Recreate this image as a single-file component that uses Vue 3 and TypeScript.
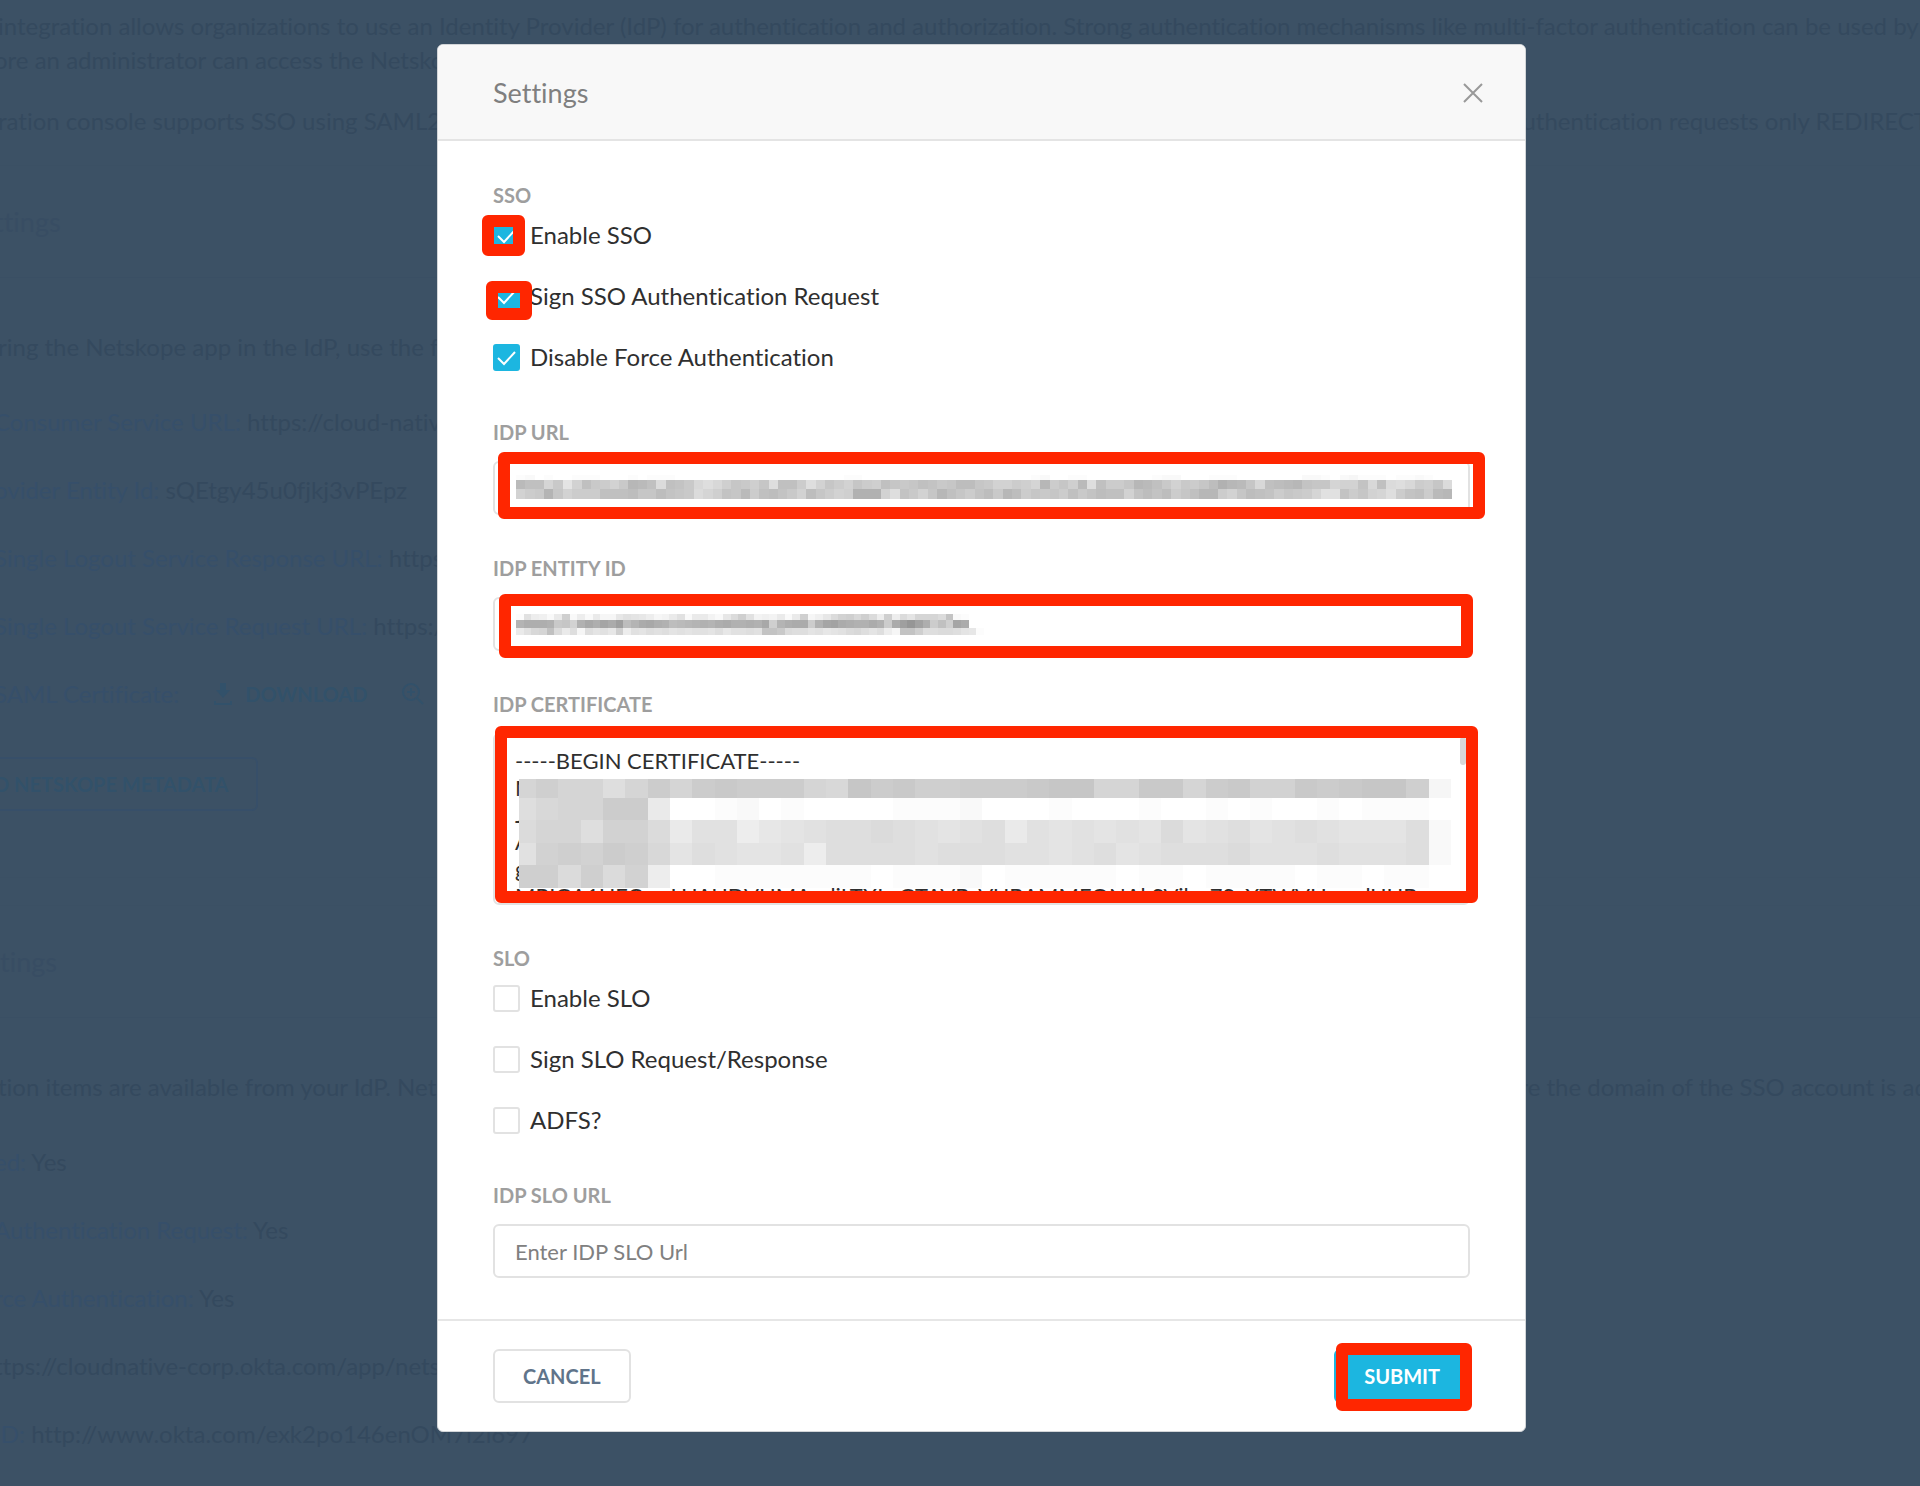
<script setup lang="ts">
import { reactive } from 'vue'

interface Fact { label: string; value: string }
interface MosaicRow { y: number; h: number; tones: string }
interface Mosaic { cells: number; height: number; rows: MosaicRow[] }

const endpoints: Fact[] = [
  { label: 'Consumer Service URL:', value: 'https://cloud-native' },
  { label: 'ovider Entity Id:', value: 'sQEtgy45u0fjkj3vPEpz' },
  { label: 'Single Logout Service Response URL:', value: 'https:/' },
  { label: 'Single Logout Service Request URL:', value: 'https://' },
]

const status: Fact[] = [
  { label: 'ed:', value: 'Yes' },
  { label: 'Authentication Request:', value: 'Yes' },
  { label: 'rce Authentication:', value: 'Yes' },
  { label: '', value: 'ttps://cloudnative-corp.okta.com/app/nets' },
  { label: 'ID:', value: 'http://www.okta.com/exk2po146enOM7i2l697' },
]

const sso = reactive([
  { id: 'enable-sso', label: 'Enable SSO', on: true, mark: 'mark-enable' },
  { id: 'sign-sso', label: 'Sign SSO Authentication Request', on: true, mark: 'mark-sign' },
  { id: 'disable-force', label: 'Disable Force Authentication', on: true, mark: '' },
])

const slo = reactive([
  { id: 'enable-slo', label: 'Enable SLO', on: false, mark: '' },
  { id: 'sign-slo', label: 'Sign SLO Request/Response', on: false, mark: '' },
  { id: 'adfs', label: 'ADFS?', on: false, mark: '' },
])

const form = reactive({
  idpUrl: '',
  entityId: '',
  certificate: [
    '-----BEGIN CERTIFICATE-----',
    'M',
    'J',
    'A',
    'g',
    'MRIGA1UECgwLUAUDVHMAodiLTXLaGTAVBzVUBAMMEQNAkSVilaz7SaXTWVHazadUHB',
  ].join('\n'),
  sloUrl: '',
})

// Each base-36 digit is one cell: the higher the digit, the darker the grey.
const urlMosaic: Mosaic = {
  cells: 100,
  height: 24,
  rows: [
    { y: 0, h: 5, tones: '1201001110001011100000000000000000011000000000000000000120011000000012200011100000002210231110112100' },
    { y: 5, h: 9, tones: 'nllei9flihfionlclkidbdgjigjbllhbfjhfjhgljijlkijmmjiffhgeohjgnblhhjonlifihjmqonjdlmnokjjeffkdlcbdhgjc' },
    { y: 14, h: 10, tones: 'fhipjfhhhlllmjjmkjicegkjnhlmkifmjhfgqqqfbkifjoljhkmiomhjijhlikmllfkmkmhjloohfjmlkhjiheaakhjfebhklhno' },
  ],
}

const entityMosaic: Mosaic = {
  cells: 61,
  height: 21,
  rows: [
    { y: 0, h: 6, tones: '1a6527g2627338a986347a277428cga454727g358cfgdgc6g6c9eeeck210' },
    { y: 6, h: 8, tones: 'prrrqijfqtruswmpstrqmnopqprsqqrqtgprsshquvsrqqsqhswzvrhlgus0' },
    { y: 14, h: 7, tones: '7adelc7b3b9a8g6a9bab9a9aa9b8aabakkicbb9a89acdb9b63kkgbbccb9810' },
  ],
}

const certMosaic: Mosaic = {
  cells: 42,
  height: 109,
  rows: [
    { y: 0, h: 19, tones: 'egeebehehihhhedjhigghhhijjeeiiehiffihijjg3' },
    { y: 19, h: 22, tones: 'bdeehh700120100001112000100010010100101110' },
    { y: 41, h: 23, tones: 'ceebffc7aa689abbcba9ab7a9a9a9c9ab9aba999b2' },
    { y: 64, h: 22, tones: 'afgfhgd9ba99a6bbbbabbbaa9ab9abbbcaaabaaab2' },
    { y: 86, h: 23, tones: 'ggcgcf600111111101112011111011011110110110' },
  ],
}

function tone(digit: string): string {
  const level = 255 - parseInt(digit, 36) * 3
  return `rgb(${level}, ${level}, ${level})`
}
</script>

<template>
  <div class="app">
    <main class="page">
      <div class="intro">
        <p class="line">integration allows organizations to use an Identity Provider (IdP) for authentication and authorization. Strong authentication mechanisms like multi-factor authentication can be used by the</p>
        <p class="line cut">ore an administrator can access the Netskope</p>
        <p class="line split">
          <span>ration console supports SSO using SAML2.0</span>
          <span>authentication requests only REDIRECT</span>
        </p>
      </div>

      <section class="panel">
        <h2 class="cut">ttings</h2>
        <div class="panel-body">
          <p class="line lead">ring the Netskope app in the IdP, use the fo</p>
          <div class="facts">
            <p v-for="fact in endpoints" :key="fact.label" class="line cut">
              <span class="fact-label">{{ fact.label }}</span> {{ fact.value }}
            </p>
            <div class="line cut cert">
              <span class="fact-label">SAML Certificate:</span>
              <button type="button" class="link">
                <svg width="18" height="22" viewBox="0 0 18 22" aria-hidden="true">
                  <path d="M6 0h6v7h4l-7 8-7-8h4z" fill="currentColor" />
                  <path d="M1 18v3h16v-3" fill="none" stroke="currentColor" stroke-width="2" />
                </svg>
                DOWNLOAD
              </button>
              <button type="button" class="link" aria-label="View">
                <svg width="22" height="22" viewBox="0 0 22 22" fill="none" stroke="currentColor" stroke-width="2" aria-hidden="true">
                  <circle cx="9" cy="9" r="8" />
                  <path d="M15 15l6 6M9 5v8M5 9h8" />
                </svg>
              </button>
            </div>
          </div>
          <button type="button" class="metadata">D NETSKOPE METADATA</button>
        </div>
      </section>

      <section class="panel">
        <h2>tings</h2>
        <div class="panel-body">
          <p class="line lead split">
            <span>tion items are available from your IdP. Nets</span>
            <span>ure the domain of the SSO account is ad</span>
          </p>
          <div class="facts">
            <p v-for="fact in status" :key="fact.label + fact.value" class="line cut">
              <span v-if="fact.label" class="fact-label">{{ fact.label }}</span> {{ fact.value }}
            </p>
          </div>
        </div>
      </section>
    </main>

    <div class="backdrop">
      <form class="modal" role="dialog" aria-labelledby="modal-title" @submit.prevent>
        <header class="modal-head">
          <h1 id="modal-title">Settings</h1>
          <button type="button" class="close" aria-label="Close">
            <svg width="20" height="20" viewBox="0 0 20 20" aria-hidden="true">
              <path d="M1 1l18 18M19 1L1 19" fill="none" stroke="#999" stroke-width="2" />
            </svg>
          </button>
        </header>

        <div class="modal-body">
          <fieldset class="group">
            <legend class="caption">SSO</legend>
            <div class="checks">
              <div v-for="item in sso" :key="item.id" class="check">
                <span class="box">
                  <input :id="item.id" v-model="item.on" type="checkbox" />
                  <svg v-if="item.on" class="tick" viewBox="0 0 27 27" aria-hidden="true">
                    <path d="M5 14l6 6L22 8" fill="none" stroke="#fff" stroke-width="2" />
                  </svg>
                </span>
                <label :for="item.id">{{ item.label }}</label>
                <span v-if="item.mark" class="mark" :class="item.mark"></span>
              </div>
            </div>
          </fieldset>

          <div class="field">
            <label class="caption" for="idp-url">IDP URL</label>
            <div class="control">
              <input id="idp-url" v-model="form.idpUrl" type="text" class="input" />
              <svg class="mosaic mosaic-url" :viewBox="`0 0 ${urlMosaic.cells} ${urlMosaic.height}`" preserveAspectRatio="none" shape-rendering="crispEdges" aria-hidden="true">
                <g v-for="row in urlMosaic.rows" :key="row.y">
                  <rect v-for="(t, i) in row.tones.split('')" :key="i" :x="i" :y="row.y" width="1" :height="row.h" :fill="tone(t)" />
                </g>
              </svg>
              <span class="mark mark-url"></span>
            </div>
          </div>

          <div class="field">
            <label class="caption" for="idp-entity">IDP ENTITY ID</label>
            <div class="control">
              <input id="idp-entity" v-model="form.entityId" type="text" class="input" />
              <svg class="mosaic mosaic-entity" :viewBox="`0 0 ${entityMosaic.cells} ${entityMosaic.height}`" preserveAspectRatio="none" shape-rendering="crispEdges" aria-hidden="true">
                <g v-for="row in entityMosaic.rows" :key="row.y">
                  <rect v-for="(t, i) in row.tones.split('')" :key="i" :x="i" :y="row.y" width="1" :height="row.h" :fill="tone(t)" />
                </g>
              </svg>
              <span class="mark mark-entity"></span>
            </div>
          </div>

          <div class="field">
            <label class="caption" for="idp-cert">IDP CERTIFICATE</label>
            <div class="control">
              <textarea id="idp-cert" v-model="form.certificate" class="input area" spellcheck="false"></textarea>
              <span class="thumb"></span>
              <svg class="mosaic mosaic-cert" :viewBox="`0.24 0 ${certMosaic.cells - 0.24} ${certMosaic.height}`" preserveAspectRatio="none" shape-rendering="crispEdges" aria-hidden="true">
                <g v-for="row in certMosaic.rows" :key="row.y">
                  <rect v-for="(t, i) in row.tones.split('')" :key="i" :x="i" :y="row.y" width="1" :height="row.h" :fill="tone(t)" />
                </g>
              </svg>
              <span class="mark mark-cert"></span>
            </div>
          </div>

          <fieldset class="group">
            <legend class="caption">SLO</legend>
            <div class="checks">
              <div v-for="item in slo" :key="item.id" class="check">
                <span class="box">
                  <input :id="item.id" v-model="item.on" type="checkbox" />
                </span>
                <label :for="item.id">{{ item.label }}</label>
              </div>
            </div>
          </fieldset>

          <div class="field">
            <label class="caption" for="slo-url">IDP SLO URL</label>
            <div class="control">
              <input id="slo-url" v-model="form.sloUrl" type="text" class="input" placeholder="Enter IDP SLO Url" />
            </div>
          </div>
        </div>

        <footer class="modal-foot">
          <button type="button" class="btn">CANCEL</button>
          <div class="submit-wrap">
            <button type="submit" class="btn primary">SUBMIT</button>
            <span class="mark mark-submit"></span>
          </div>
        </footer>
      </form>
    </div>
  </div>
</template>

<style>
body {
  margin: 0;
  background: #3c5165;
}
</style>

<style scoped>
* {
  box-sizing: border-box;
}

.app {
  display: grid;
  min-height: 100vh;
  overflow: hidden;
  background: #3c5165;
  font-family: Lato, "Open Sans", sans-serif;
  font-size: 24px;
  font-variant-ligatures: none;
  line-height: 34px;
  color: #34495e;
}

.page,
.backdrop {
  grid-area: 1 / 1;
  min-width: 0;
}

/* Page behind the dialog */
.page {
  padding-top: 9px;
  overflow: hidden;
}

.line {
  margin: 0 0 0 -2px;
  white-space: nowrap;
}

.cut {
  margin-left: -6px;
}

.split {
  display: flex;
  justify-content: space-between;
  margin-right: -8px;
}

.intro .split {
  margin-top: 27px;
}

.panel {
  margin-top: 27px;
  border-top: 1px solid #3b5064;
  border-bottom: 1px solid #3b5064;
}

.panel h2 {
  display: flex;
  align-items: center;
  height: 112px;
  margin-top: 0;
  margin-bottom: 0;
  border-bottom: 1px solid #3a4f64;
  font-size: 27px;
  font-weight: 400;
  color: #384d63;
}

.panel-body {
  padding: 52px 0 66px;
}

.lead {
  margin-bottom: 41px;
}

.facts {
  display: flex;
  flex-direction: column;
  gap: 34px;
}

.fact-label {
  color: #364f6a;
}

.cert {
  display: flex;
  align-items: center;
}

.link {
  display: flex;
  align-items: center;
  gap: 13px;
  margin-left: 35px;
  padding: 0;
  border: 0;
  background: none;
  font: 700 20px/24px Lato, sans-serif;
  color: #32516a;
}

.metadata {
  height: 54px;
  margin: 46px 0 0 -6px;
  padding: 0 28px 0 0;
  border: 2px solid #374f69;
  border-left: 0;
  border-radius: 0 6px 6px 0;
  background: none;
  font: 700 20px/24px Lato, sans-serif;
  color: #32516a;
}

/* Dialog */
.backdrop {
  position: relative;
  display: flex;
  align-items: flex-start;
  justify-content: center;
  padding: 44px 0 55px 43px;
}

.modal {
  width: 100%;
  max-width: 1089px;
  border: 1px solid #d2d5d8;
  border-radius: 6px;
  background: #fff;
  color: #2f2f2f;
}

.modal-head {
  display: flex;
  align-items: center;
  justify-content: space-between;
  height: 96px;
  padding: 2px 42px 0 55px;
  border-bottom: 2px solid #e4e4e4;
  border-radius: 5px 5px 0 0;
  background: #f8f8f8;
}

.modal-head h1 {
  margin: 0;
  font-size: 27px;
  font-weight: 400;
  color: #7f7f7f;
}

.close {
  display: flex;
  padding: 0;
  border: 0;
  background: none;
}

.modal-body {
  display: flex;
  flex-direction: column;
  padding: 42px 55px 41px;
}

.group {
  min-width: 0;
  margin: 0 0 48px;
  padding: 0;
  border: 0;
}

.caption {
  display: block;
  padding: 0;
  font-size: 20px;
  font-weight: 700;
  line-height: 24px;
  color: #9e9e9e;
}

.checks {
  display: flex;
  flex-direction: column;
  gap: 31px;
  padding-top: 13px;
}

.check {
  position: relative;
  display: flex;
  align-items: center;
  gap: 10px;
  line-height: 30px;
}

.box {
  position: relative;
  display: flex;
}

.box input {
  width: 27px;
  height: 27px;
  margin: 0;
  border: 2px solid #e2e2e2;
  border-radius: 3px;
  background: #fff;
  appearance: none;
}

.box input:checked {
  border-color: #1cb6e0;
  background: #1cb6e0;
}

.tick {
  position: absolute;
  inset: 0;
  pointer-events: none;
}

.field {
  display: flex;
  flex-direction: column;
  gap: 17px;
  margin-bottom: 41px;
}

.field:last-child {
  margin-bottom: 0;
}

.control {
  position: relative;
  display: flex;
}

.input {
  width: 100%;
  height: 54px;
  padding: 0 20px;
  border: 2px solid #e2e2e2;
  border-radius: 6px;
  outline: 0;
  background: #fff;
  font: 400 22px/27px Lato, sans-serif;
  color: #2f2f2f;
}

.input::placeholder {
  color: #808080;
  opacity: 1;
}

.area {
  height: 172px;
  padding-top: 12px;
  overflow: hidden;
  resize: none;
  white-space: pre;
}

.thumb {
  position: absolute;
  top: 4px;
  right: 4px;
  width: 6px;
  height: 28px;
  border-radius: 3px;
  background: #d8d8d8;
}

.modal-foot {
  display: flex;
  align-items: center;
  justify-content: space-between;
  padding: 28px 55px;
  border-top: 2px solid #e6e6e6;
}

.btn {
  height: 54px;
  padding: 0 28px;
  border: 2px solid #e2e2e2;
  border-radius: 6px;
  background: #fff;
  font: 700 20px/24px Lato, sans-serif;
  color: #60748a;
}

.btn.primary {
  border-color: #1cb6e0;
  background: #1cb6e0;
  color: #fff;
}

.submit-wrap {
  position: relative;
  display: flex;
}

/* Pixelated cover over private values */
.mosaic {
  position: absolute;
  left: 23px;
}

.mosaic-url {
  top: 14px;
  width: 936px;
  height: 24px;
}

.mosaic-entity {
  top: 17px;
  width: 468px;
  height: 21px;
}

.mosaic-cert {
  top: 46px;
  left: 26px;
  width: 932px;
  height: 109px;
}

/* Red call-out frames */
.mark {
  position: absolute;
  border: 12px solid #ff2600;
  border-radius: 6px;
  pointer-events: none;
}

.mark-enable {
  top: -5px;
  left: -11px;
  width: 43px;
  height: 41px;
}

.mark-sign {
  top: 0;
  left: -7px;
  width: 46px;
  height: 39px;
}

.mark-url {
  inset: -9px -15px -4px 5px;
}

.mark-entity {
  inset: -3px -3px -7px 6px;
}

.mark-cert {
  inset: -7px -8px 2px 2px;
}

.mark-submit {
  inset: -6px -2px -8px 2px;
}
</style>
